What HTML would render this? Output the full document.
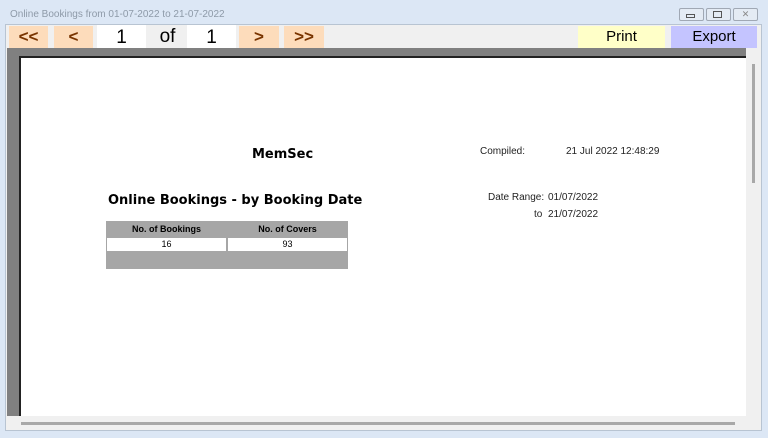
<!DOCTYPE html>
<html><head><style>
*{margin:0;padding:0;box-sizing:border-box}
body{width:768px;height:438px;background:#dce7f5;position:relative;overflow:hidden;font-family:"Liberation Sans",sans-serif}
.a{position:absolute}
.btn{position:absolute;top:26px;height:22px;background:#fddcbb;color:#7a3500;font-size:17px;text-align:center;line-height:22px;font-weight:bold}
.num{position:absolute;top:25px;height:24px;background:#fff;font-size:19px;text-align:center;line-height:26px}
.s{font-size:10px;color:#222}
</style></head><body>
<div class="a" style="left:10px;top:9px;font-size:10px;color:#8e9aa8">Online Bookings from 01-07-2022 to 21-07-2022</div>
<div class="a" style="left:679px;top:8px;width:25px;height:13px;border:1px solid #a0a8b4;border-radius:2px;background:#e4ebf4"></div>
<div class="a" style="left:686px;top:14px;width:9px;height:4px;border:1px solid #555"></div>
<div class="a" style="left:706px;top:8px;width:25px;height:13px;border:1px solid #a0a8b4;border-radius:2px;background:#e4ebf4"></div>
<div class="a" style="left:713px;top:11px;width:9px;height:7px;border:1px solid #555"></div>
<div class="a" style="left:733px;top:8px;width:25px;height:13px;border:1px solid #a0a8b4;border-radius:2px;background:#e4ebf4;font-size:9px;text-align:center;line-height:11px;color:#888">✕</div>
<div class="a" style="left:5px;top:24px;width:757px;height:407px;background:#f0f0f0;border:1px solid #b8c4d2"></div>
<div class="btn" style="left:9px;width:39px">&lt;&lt;</div>
<div class="btn" style="left:54px;width:39px">&lt;</div>
<div class="num" style="left:97px;width:49px">1</div>
<div class="a" style="left:150px;top:25px;width:35px;font-size:19px;line-height:24px;text-align:center">of</div>
<div class="num" style="left:187px;width:49px">1</div>
<div class="btn" style="left:239px;width:40px">&gt;</div>
<div class="btn" style="left:284px;width:40px">&gt;&gt;</div>
<div class="a" style="left:578px;top:26px;width:87px;height:22px;background:#ffffc8;font-size:15px;text-align:center;line-height:22px">Print</div>
<div class="a" style="left:671px;top:26px;width:86px;height:22px;background:#c4c4ff;font-size:15px;text-align:center;line-height:22px">Export</div>
<div class="a" style="left:7px;top:48px;width:739px;height:368px;background:#808080"></div>
<div class="a" style="left:19px;top:56px;width:727px;height:360px;background:#fff;border-top:2px solid #222;border-left:2px solid #222"></div>
<div class="a" style="left:746px;top:48px;width:15px;height:368px;background:#f0f0f0"></div>
<div class="a" style="left:752px;top:64px;width:3px;height:119px;background:#a8a8a8"></div>
<div class="a" style="left:21px;top:422px;width:714px;height:3px;background:#a8a8a8"></div>
<div class="a" style="left:252px;top:147px;font-size:13px;font-weight:bold;font-family:'DejaVu Sans',sans-serif">MemSec</div>
<div class="a" style="left:108px;top:193px;font-size:13px;font-weight:bold;font-family:'DejaVu Sans',sans-serif">Online Bookings - by Booking Date</div>
<div class="a s" style="left:480px;top:146px">Compiled:</div>
<div class="a s" style="left:566px;top:146px">21 Jul 2022 12:48:29</div>
<div class="a s" style="left:488px;top:192px">Date Range:</div>
<div class="a s" style="left:548px;top:192px">01/07/2022</div>
<div class="a s" style="left:534px;top:209px">to</div>
<div class="a s" style="left:548px;top:209px">21/07/2022</div>
<div class="a" style="left:106px;top:221px;width:242px;height:48px;background:#a6a6a6"></div>
<div class="a" style="left:106px;top:224px;width:121px;font-size:9px;font-weight:bold;text-align:center">No. of Bookings</div>
<div class="a" style="left:227px;top:224px;width:121px;font-size:9px;font-weight:bold;text-align:center">No. of Covers</div>
<div class="a" style="left:107px;top:238px;width:119px;height:13px;background:#fff;font-size:9px;text-align:center;line-height:13px">16</div>
<div class="a" style="left:228px;top:238px;width:119px;height:13px;background:#fff;font-size:9px;text-align:center;line-height:13px">93</div>
</body></html>
